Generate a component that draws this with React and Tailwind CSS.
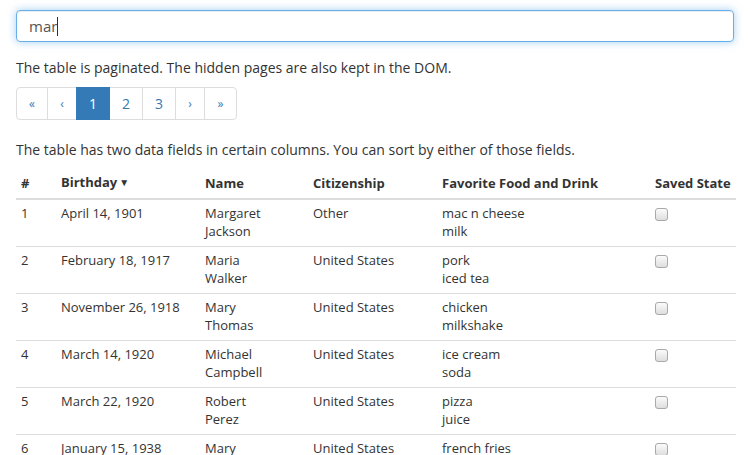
import React from "react";

const rows = [
  ["1", "April 14, 1901", "Margaret", "Jackson", "Other", "mac n cheese", "milk"],
  ["2", "February 18, 1917", "Maria", "Walker", "United States", "pork", "iced tea"],
  ["3", "November 26, 1918", "Mary", "Thomas", "United States", "chicken", "milkshake"],
  ["4", "March 14, 1920", "Michael", "Campbell", "United States", "ice cream", "soda"],
  ["5", "March 22, 1920", "Robert", "Perez", "United States", "pizza", "juice"],
  ["6", "January 15, 1938", "Mary", "Martin", "United States", "french fries", "juice"],
];

function PageBtn({ children, active, w, first, last, glyph }) {
  return (
    <span
      className={
        "flex items-center justify-center h-[33px] border " +
        (active
          ? "bg-[#337ab7] border-[#337ab7] text-white relative z-10 "
          : "bg-white border-[#ddd] text-[#337ab7] ") +
        (glyph ? "text-[12px] " : "text-[14px] ") +
        (first ? "rounded-l-[4px] " : "-ml-px ") +
        (last ? "rounded-r-[4px] " : "") +
        w
      }
    >
      {children}
    </span>
  );
}

function Checkbox() {
  return (
    <span className="inline-block w-[13px] h-[13px] rounded-[3px] border border-[#a9a9a9] bg-gradient-to-b from-[#fbfbfb] to-[#dedede] mt-[4px]" />
  );
}

export default function App() {
  return (
    <div
      className="bg-white text-[#333] text-[14px] leading-[20px] px-4 pt-[10px] min-h-[455px] overflow-hidden"
      style={{ fontFamily: '"Open Sans", "Noto Sans", sans-serif' }}
    >
      <div className="h-[32px] border border-[#66afe9] rounded-[4px] shadow-[inset_0_1px_1px_rgba(0,0,0,0.075),0_0_8px_rgba(102,175,233,0.6)] flex items-center px-3 text-[15px] text-[#555]">
        <span>mar</span>
        <span className="inline-block w-px h-[19px] bg-[#333]" />
      </div>

      <p className="mt-[16px] mb-[9px]">The table is paginated. The hidden pages are also kept in the DOM.</p>

      <div className="flex">
        <PageBtn first glyph w="w-[32px]">«</PageBtn>
        <PageBtn glyph w="w-[30px]">‹</PageBtn>
        <PageBtn active w="w-[34px]">1</PageBtn>
        <PageBtn w="w-[34px]">2</PageBtn>
        <PageBtn w="w-[34px]">3</PageBtn>
        <PageBtn glyph w="w-[30px]">›</PageBtn>
        <PageBtn last glyph w="w-[33px]">»</PageBtn>
      </div>

      <p className="mt-[20px] mb-[9px]">The table has two data fields in certain columns. You can sort by either of those fields.</p>

      <table className="w-full table-fixed border-collapse text-[13px] leading-[18px]">
        <colgroup>
          <col className="w-[40px]" />
          <col className="w-[144px]" />
          <col className="w-[108px]" />
          <col className="w-[129px]" />
          <col className="w-[213px]" />
          <col className="w-[86px]" />
        </colgroup>
        <thead>
          <tr className="border-b-2 border-[#ddd] text-left">
            <th className="px-[5px] pt-[4px] pb-[6px] font-bold">#</th>
            <th className="px-[5px] pt-[4px] pb-[6px] font-bold">
              Birthday<span className="text-[10px] ml-[2px] relative top-[-1px]">▼</span>
            </th>
            <th className="px-[5px] pt-[4px] pb-[6px] font-bold">Name</th>
            <th className="px-[5px] pt-[4px] pb-[6px] font-bold">Citizenship</th>
            <th className="px-[5px] pt-[4px] pb-[6px] font-bold">Favorite Food and Drink</th>
            <th className="px-[5px] pt-[4px] pb-[6px] font-bold whitespace-nowrap">Saved State</th>
          </tr>
        </thead>
        <tbody>
          {rows.map((r) => (
            <tr key={r[0]} className="border-b border-[#ddd] align-top">
              <td className="px-[5px] pt-[4px] pb-[6px]">{r[0]}</td>
              <td className="px-[5px] pt-[4px] pb-[6px]">{r[1]}</td>
              <td className="px-[5px] pt-[4px] pb-[6px]">
                <div>{r[2]}</div>
                <div>{r[3]}</div>
              </td>
              <td className="px-[5px] pt-[4px] pb-[6px]">{r[4]}</td>
              <td className="px-[5px] pt-[4px] pb-[6px]">
                <div>{r[5]}</div>
                <div>{r[6]}</div>
              </td>
              <td className="px-[5px] pt-[4px] pb-[6px]">
                <Checkbox />
              </td>
            </tr>
          ))}
        </tbody>
      </table>
    </div>
  );
}
